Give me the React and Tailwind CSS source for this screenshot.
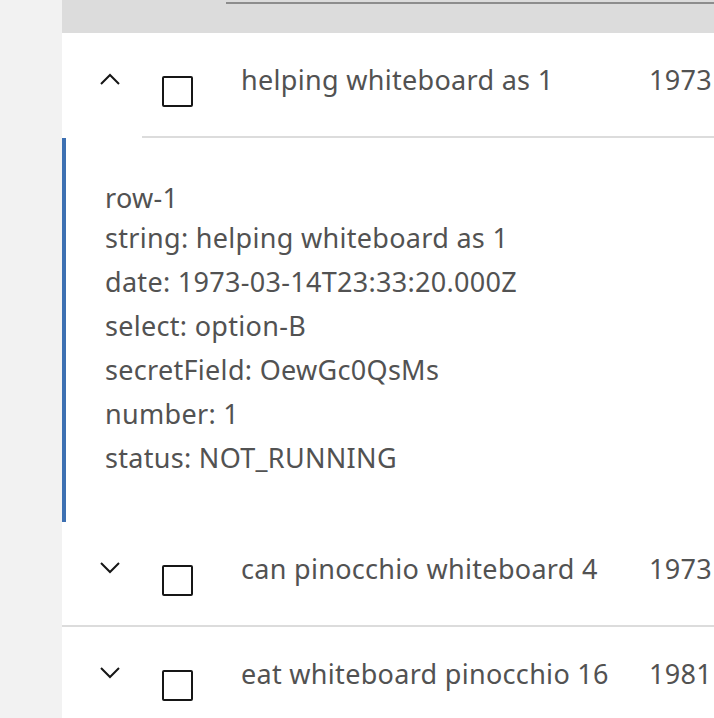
import React from "react";

const rows = [
  { id: "row-1", name: "helping whiteboard as 1", date: "1973", expanded: true },
  { id: "row-2", name: "can pinocchio whiteboard 4", date: "1973", expanded: false },
  { id: "row-3", name: "eat whiteboard pinocchio 16", date: "1981", expanded: false },
];

const details = [
  "row-1",
  "string: helping whiteboard as 1",
  "date: 1973-03-14T23:33:20.000Z",
  "select: option-B",
  "secretField: OewGc0QsMs",
  "number: 1",
  "status: NOT_RUNNING",
];

const Chevron = ({ up }) => (
  <svg width="20" height="12" viewBox="0 0 20 12" fill="none">
    <polyline
      points={up ? "1,11 10,2 19,11" : "1,1 10,10 19,1"}
      stroke="#161616"
      strokeWidth="2"
    />
  </svg>
);

const Row = ({ row, border }) => (
  <div className={`flex h-[105px] ${border ? "border-b-2 border-[#dcdcdc]" : ""}`}>
    <div className="w-[80px] shrink-0 pl-[38px] pt-[40px]">
      <Chevron up={row.expanded} />
    </div>
    <div
      className={`flex flex-1 ${row.expanded ? "border-b-2 border-[#dcdcdc]" : ""}`}
    >
      <div className="w-[99px] shrink-0 pl-[20px] pt-[43px]">
        <div className="h-[31px] w-[31px] rounded-[2px] border-2 border-[#161616]" />
      </div>
      <div className="w-[408px] shrink-0 whitespace-nowrap pt-[29px] text-[27px] leading-[36px] tracking-[0.3px] text-[#525252]">
        {row.name}
      </div>
      <div className="whitespace-nowrap pt-[29px] text-[27px] leading-[36px] tracking-[0.3px] text-[#525252]">
        {row.date}
      </div>
    </div>
  </div>
);

export default function App() {
  return (
    <div
      className="flex h-[718px] overflow-hidden bg-[#f2f2f2]"
      style={{ fontFamily: '"Noto Sans", sans-serif' }}
    >
      <div className="w-[62px] shrink-0" />
      <div className="flex-1 overflow-hidden bg-white">
        <div className="flex h-[33px] bg-[#dcdcdc]">
          <div className="w-[164px] shrink-0" />
          <div className="flex-1 pt-[2px]">
            <div className="h-[2px] bg-[#8d8d8d]" />
          </div>
        </div>

        <Row row={rows[0]} />

        {/* expanded row content */}
        <div className="border-l-4 border-[#3d70b2] pb-[42px] pl-[39px] pt-[42px] text-[27px] leading-[44px] tracking-[0.3px] text-[#525252]">
          {details.map((line, i) => (
            <div key={line} className={`whitespace-nowrap ${i === 0 ? "leading-[36px]" : ""}`}>
              {line}
            </div>
          ))}
        </div>

        <Row row={rows[1]} border />
        <Row row={rows[2]} />
      </div>
    </div>
  );
}
